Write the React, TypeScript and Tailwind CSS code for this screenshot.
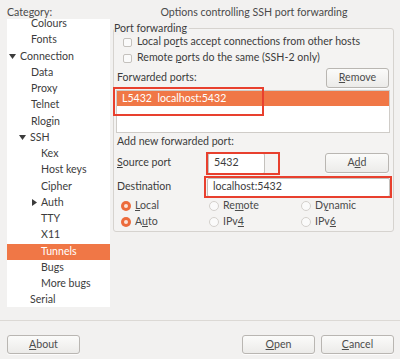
import React from "react";

const treeItems: { label: string; indent: number; arrow?: "down" | "right"; selected?: boolean }[] = [
  { label: "Colours", indent: 24 },
  { label: "Fonts", indent: 24 },
  { label: "Connection", indent: 13, arrow: "down" },
  { label: "Data", indent: 24 },
  { label: "Proxy", indent: 24 },
  { label: "Telnet", indent: 24 },
  { label: "Rlogin", indent: 24 },
  { label: "SSH", indent: 23, arrow: "down" },
  { label: "Kex", indent: 34 },
  { label: "Host keys", indent: 34 },
  { label: "Cipher", indent: 34 },
  { label: "Auth", indent: 34, arrow: "right" },
  { label: "TTY", indent: 34 },
  { label: "X11", indent: 34 },
  { label: "Tunnels", indent: 34, selected: true },
  { label: "Bugs", indent: 34 },
  { label: "More bugs", indent: 34 },
  { label: "Serial", indent: 23 },
];

const Btn = ({ children, className = "" }: { children: React.ReactNode; className?: string }) => (
  <div
    className={`flex items-center justify-center rounded-[3px] border border-[#b9b6b2] bg-gradient-to-b from-[#fbfbfa] to-[#ecebe9] text-[#4c4c4c] shadow-[0_1px_0_rgba(255,255,255,0.8)] ${className}`}
  >
    {children}
  </div>
);

const Check = ({ children }: { children: React.ReactNode }) => (
  <div className="flex h-4 items-center pl-[9px]">
    <span className="mr-[5px] h-[9px] w-[9px] rounded-[2px] border border-[#c4c1bd] bg-[#fafafa]" />
    <span>{children}</span>
  </div>
);

const Radio = ({ on, children }: { on?: boolean; children: React.ReactNode }) => (
  <div className="flex h-4 items-center">
    {on ? (
      <span className="mr-[4px] flex h-[10px] w-[10px] items-center justify-center rounded-full bg-[#ec6b3c]">
        <span className="h-[4px] w-[4px] rounded-full bg-[#fbe3d8]" />
      </span>
    ) : (
      <span className="mr-[4px] h-[10px] w-[10px] rounded-full border border-[#d3d0cc] bg-[#fafafa]" />
    )}
    <span className="text-[#4a4a4a]">{children}</span>
  </div>
);

export default function App() {
  return (
    <div
      className="relative flex h-[359px] w-[400px] flex-col overflow-hidden bg-[#f2f1f0] text-[10.6px] text-[#3c3c3c]"
      style={{ fontFamily: "Lato, 'Open Sans', sans-serif" }}
    >
      <div className="flex h-[320px]">
        {/* left: category tree */}
        <div className="flex w-[113px] flex-col pl-[7px] pt-[5px]">
          <div className="h-[14px] leading-[14px] text-[#4a4a4a]">Category:</div>
          <div className="h-[288px] w-[103px] overflow-hidden bg-white">
            <div className="-mt-[3px]">
              {treeItems.map((it) => (
                <div
                  key={it.label}
                  className={`relative flex h-[16.25px] items-center ${it.selected ? "bg-[#f07746] text-white" : ""}`}
                  style={{ paddingLeft: it.indent }}
                >
                  {it.arrow === "down" && (
                    <svg className="absolute" style={{ left: it.indent - 11 }} width="7" height="5" viewBox="0 0 7 5">
                      <polygon points="0,0 7,0 3.5,5" fill="#3c3c3c" />
                    </svg>
                  )}
                  {it.arrow === "right" && (
                    <svg className="absolute" style={{ left: it.indent - 9 }} width="5" height="7" viewBox="0 0 5 7">
                      <polygon points="0,0 5,3.5 0,7" fill="#3c3c3c" />
                    </svg>
                  )}
                  {it.label}
                </div>
              ))}
            </div>
          </div>
        </div>

        {/* right: options */}
        <div className="flex w-[287px] flex-col pt-[5px]">
          <div className="h-[14px] pr-[5px] text-center leading-[14px] text-[#4a4a4a]">
            Options controlling SSH port forwarding
          </div>
          <div className="relative mr-[6px] mt-[9px] h-[204px] rounded-[3px] border border-[#d6d3cf] bg-[#f4f3f2]">
            <div className="absolute -top-[8px] left-0 bg-[#f2f1f0] pr-[2px] leading-[14px]">Port forwarding</div>
            <div className="pt-[5px]">
              <Check>
                Local po<u>r</u>ts accept connections from other hosts
              </Check>
              <Check>
                Remote <u>p</u>orts do the same (SSH-2 only)
              </Check>
              <div className="flex h-[24px] items-center justify-between pl-[3px] pr-[4px]">
                <span>Forwarded ports:</span>
                <Btn className="h-[20px] w-[63px]">
                  <span><u>R</u>emove</span>
                </Btn>
              </div>
              <div className="ml-[2px] mr-[3px] h-[43px] border border-[#cfccc8] bg-white">
                <div className="flex h-[15px] items-center bg-[#f07746] pl-[5px] text-white">
                  L5432&nbsp;&nbsp;localhost:5432
                </div>
              </div>
              <div className="flex h-[17px] items-end pl-[3px]">Add new forwarded port:</div>
              <div className="mt-[2px] flex h-[22px] items-center pl-[3px] pr-[4px]">
                <span className="w-[91px]">
                  <u>S</u>ource port
                </span>
                <div className="flex h-[21px] w-[57px] items-center rounded-[2px] border border-[#c4c1bd] bg-white pl-[5px]">
                  5432
                </div>
                <div className="flex-1" />
                <Btn className="h-[20px] w-[64px]">
                  <span>A<u>d</u>d</span>
                </Btn>
              </div>
              <div className="mt-[3px] flex h-[20px] items-center pl-[3px] pr-[3px]">
                <span className="w-[90px]">
                  Dest<u>i</u>nation
                </span>
                <div className="flex h-[19px] flex-1 items-center rounded-[2px] border border-[#c4c1bd] bg-white pl-[5px]">
                  localhost:5432
                </div>
              </div>
              <div className="mt-[1px] grid grid-cols-[88px_92px_1fr] pl-[7px]">
                <Radio on>
                  <u>L</u>ocal
                </Radio>
                <Radio>
                  Re<u>m</u>ote
                </Radio>
                <Radio>
                  D<u>y</u>namic
                </Radio>
                <Radio on>
                  A<u>u</u>to
                </Radio>
                <Radio>
                  IPv<u>4</u>
                </Radio>
                <Radio>
                  IPv<u>6</u>
                </Radio>
              </div>
            </div>
          </div>
        </div>
      </div>

      {/* footer */}
      <div className="h-px bg-[#dcd9d5]" />
      <div className="flex items-center pl-[7px] pr-[6px] pt-[14px]">
        <Btn className="h-[19px] w-[73px]">
          <span><u>A</u>bout</span>
        </Btn>
        <div className="flex-1" />
        <Btn className="h-[19px] w-[73px]">
          <span><u>O</u>pen</span>
        </Btn>
        <Btn className="ml-[6px] h-[19px] w-[73px]">
          <span><u>C</u>ancel</span>
        </Btn>
      </div>

      {/* red annotation boxes */}
      <div className="absolute left-[113px] top-[87px] h-[29px] w-[151px] border-2 border-[#e8402e]" />
      <div className="absolute left-[206px] top-[152px] h-[23px] w-[74px] border-2 border-[#e8402e]" />
      <div className="absolute left-[204px] top-[176px] h-[22px] w-[188px] border-2 border-[#e8402e]" />
    </div>
  );
}
